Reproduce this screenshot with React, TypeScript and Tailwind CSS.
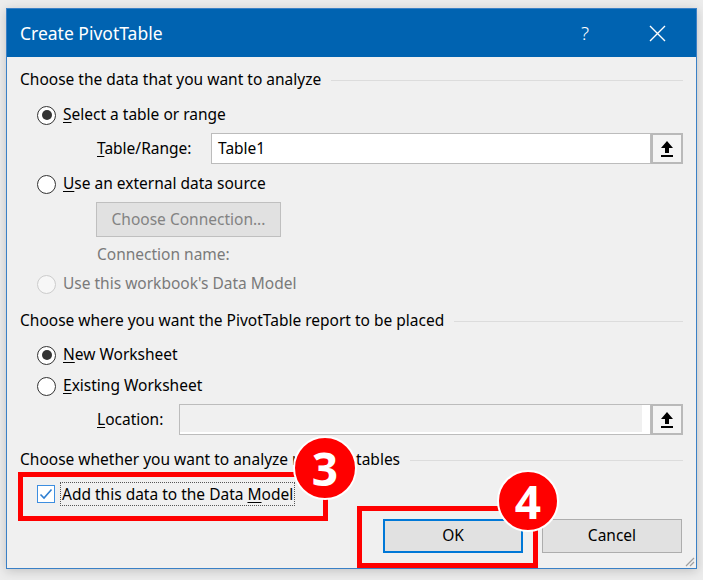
import React from "react";

const font = { fontFamily: '"Segoe UI", "Noto Sans", "Open Sans", sans-serif' };

function Radio({ checked, disabled }: { checked?: boolean; disabled?: boolean }) {
  return (
    <span
      className={`flex h-[19px] w-[19px] shrink-0 items-center justify-center rounded-full border ${
        disabled ? "border-[#cccccc] bg-[#f7f7f7]" : "border-[#333333] bg-white"
      }`}
    >
      {checked && <span className="h-[10px] w-[10px] rounded-full bg-[#333333]" />}
    </span>
  );
}

function Heading({ children }: { children: React.ReactNode }) {
  return (
    <div className="flex h-[22px] items-center pr-[13px]">
      <span className="whitespace-nowrap">{children}</span>
      <span className="ml-[10px] h-px flex-1 bg-[#dcdcdc]" />
    </div>
  );
}

function PickButton() {
  return (
    <div className="flex h-[31px] w-[32px] shrink-0 items-center justify-center border-2 border-[#b9b9b9] bg-[#f4f4f4]">
      <svg width="14" height="18" viewBox="0 0 14 18">
        <polygon points="7,1 13,8 9,8 9,13 5,13 5,8 1,8" fill="#000" />
        <rect x="1" y="15" width="12" height="2" fill="#000" />
      </svg>
    </div>
  );
}

export default function App() {
  return (
    <div className="h-[580px] w-[703px] bg-[#ececec] pl-[6px] pt-[8px]" style={font}>
      <div className="relative flex h-[561px] w-[691px] flex-col border border-[#3a80c6] bg-[#f0f0f0] text-[15.5px] text-black shadow-[0_2px_10px_rgba(0,0,0,0.18)]">
        {/* title bar */}
        <div className="flex h-[48px] shrink-0 items-center bg-[#0063b1] text-white">
          <span className="ml-[13px] text-[17.5px]">Create PivotTable</span>
          <span className="ml-auto mr-[60px] text-[19px] font-light">?</span>
          <svg className="mr-[30px]" width="17" height="17" viewBox="0 0 17 17">
            <path d="M1 1L16 16M16 1L1 16" stroke="#fff" strokeWidth="1.4" />
          </svg>
        </div>

        <div className="flex flex-col pl-[13px]">
          <div className="mt-[12px]">
            <Heading>Choose the data that you want to analyze</Heading>
          </div>

          <div className="mt-[13px] flex h-[22px] items-center pl-[17px]">
            <Radio checked />
            <span className="ml-[7px]">
              <u className="underline-offset-2">S</u>elect a table or range
            </span>
          </div>

          <div className="mt-[7px] flex h-[31px] items-center pl-[77px] pr-[13px]">
            <span className="w-[114px]">
              <u className="underline-offset-2">T</u>able/Range:
            </span>
            <div className="flex h-[31px] flex-1 items-center border border-[#bcbcbc] bg-white pl-[6px]">
              Table1
            </div>
            <PickButton />
          </div>

          <div className="mt-[9px] flex h-[22px] items-center pl-[17px]">
            <Radio />
            <span className="ml-[7px]">
              <u className="underline-offset-2">U</u>se an external data source
            </span>
          </div>

          <div className="mt-[7px] flex pl-[76px]">
            <div className="flex h-[35px] w-[185px] items-center justify-center border border-[#bfbfbf] bg-[#e1e1e1] text-[#838383]">
              Choose Connection...
            </div>
          </div>

          <div className="mt-[7px] flex h-[22px] items-center pl-[77px] text-[#7a7a7a]">Connection name:</div>

          <div className="mt-[7px] flex h-[22px] items-center pl-[17px] text-[#7a7a7a]">
            <Radio disabled />
            <span className="ml-[7px]">Use this workbook's Data Model</span>
          </div>

          <div className="mt-[15px]">
            <Heading>Choose where you want the PivotTable report to be placed</Heading>
          </div>

          <div className="mt-[12px] flex h-[22px] items-center pl-[17px]">
            <Radio checked />
            <span className="ml-[7px]">
              <u className="underline-offset-2">N</u>ew Worksheet
            </span>
          </div>

          <div className="mt-[9px] flex h-[22px] items-center pl-[17px]">
            <Radio />
            <span className="ml-[7px]">
              <u className="underline-offset-2">E</u>xisting Worksheet
            </span>
          </div>

          <div className="mt-[7px] flex h-[31px] items-center pl-[77px] pr-[13px]">
            <span className="w-[82px]">
              <u className="underline-offset-2">L</u>ocation:
            </span>
            <div className="h-[31px] flex-1 border border-[#bcbcbc] bg-[#f0f0f0] shadow-[inset_-8px_0_0_#ffffff,inset_0_-2px_0_#ffffff]" />
            <PickButton />
          </div>

          <div className="mt-[14px]">
            <Heading>Choose whether you want to analyze multiple tables</Heading>
          </div>

          <div className="mt-[12px] flex h-[22px] items-center pl-[17px]">
            <span className="flex h-[18px] w-[18px] shrink-0 items-center justify-center border border-[#3d8ee0] bg-white">
              <svg width="14" height="12" viewBox="0 0 14 12">
                <path d="M1.5 6.5L5 10L12.5 1.5" fill="none" stroke="#2f7fd1" strokeWidth="1.6" />
              </svg>
            </span>
            <span className="ml-[5px] border border-dotted border-[#555] px-[1px] leading-[22px]">
              Add this data to the Data <u className="underline-offset-2">M</u>odel
            </span>
          </div>

          <div className="mt-[14px] flex gap-[19px] pl-[363px]">
            <div className="flex h-[34px] w-[140px] items-center justify-center border-2 border-[#0078d7] bg-[#e1e1e1]">
              OK
            </div>
            <div className="flex h-[34px] w-[140px] items-center justify-center border border-[#adadad] bg-[#e1e1e1]">
              Cancel
            </div>
          </div>
        </div>

        {/* resize grip */}
        <svg className="absolute bottom-[1px] right-[1px]" width="12" height="12" viewBox="0 0 12 12">
          <path d="M11 3L3 11M11 7L7 11" stroke="#a0a0a0" strokeWidth="1.2" />
        </svg>

        {/* annotations */}
        <div className="pointer-events-none absolute left-[11px] top-[463px] h-[49px] w-[310px] border-[5px] border-[#ff0000]" />
        <div className="pointer-events-none absolute left-[350px] top-[497px] h-[62px] w-[181px] border-[5px] border-[#ff0000]" />
        <div className="absolute left-[286px] top-[427px] flex h-[64px] w-[64px] items-center justify-center rounded-full border-2 border-white bg-[#ff0000] text-[46px] font-bold text-white">
          3
        </div>
        <div className="absolute left-[490px] top-[461px] flex h-[62px] w-[62px] items-center justify-center rounded-full border-2 border-white bg-[#ff0000] text-[46px] font-bold text-white">
          4
        </div>
      </div>
    </div>
  );
}
